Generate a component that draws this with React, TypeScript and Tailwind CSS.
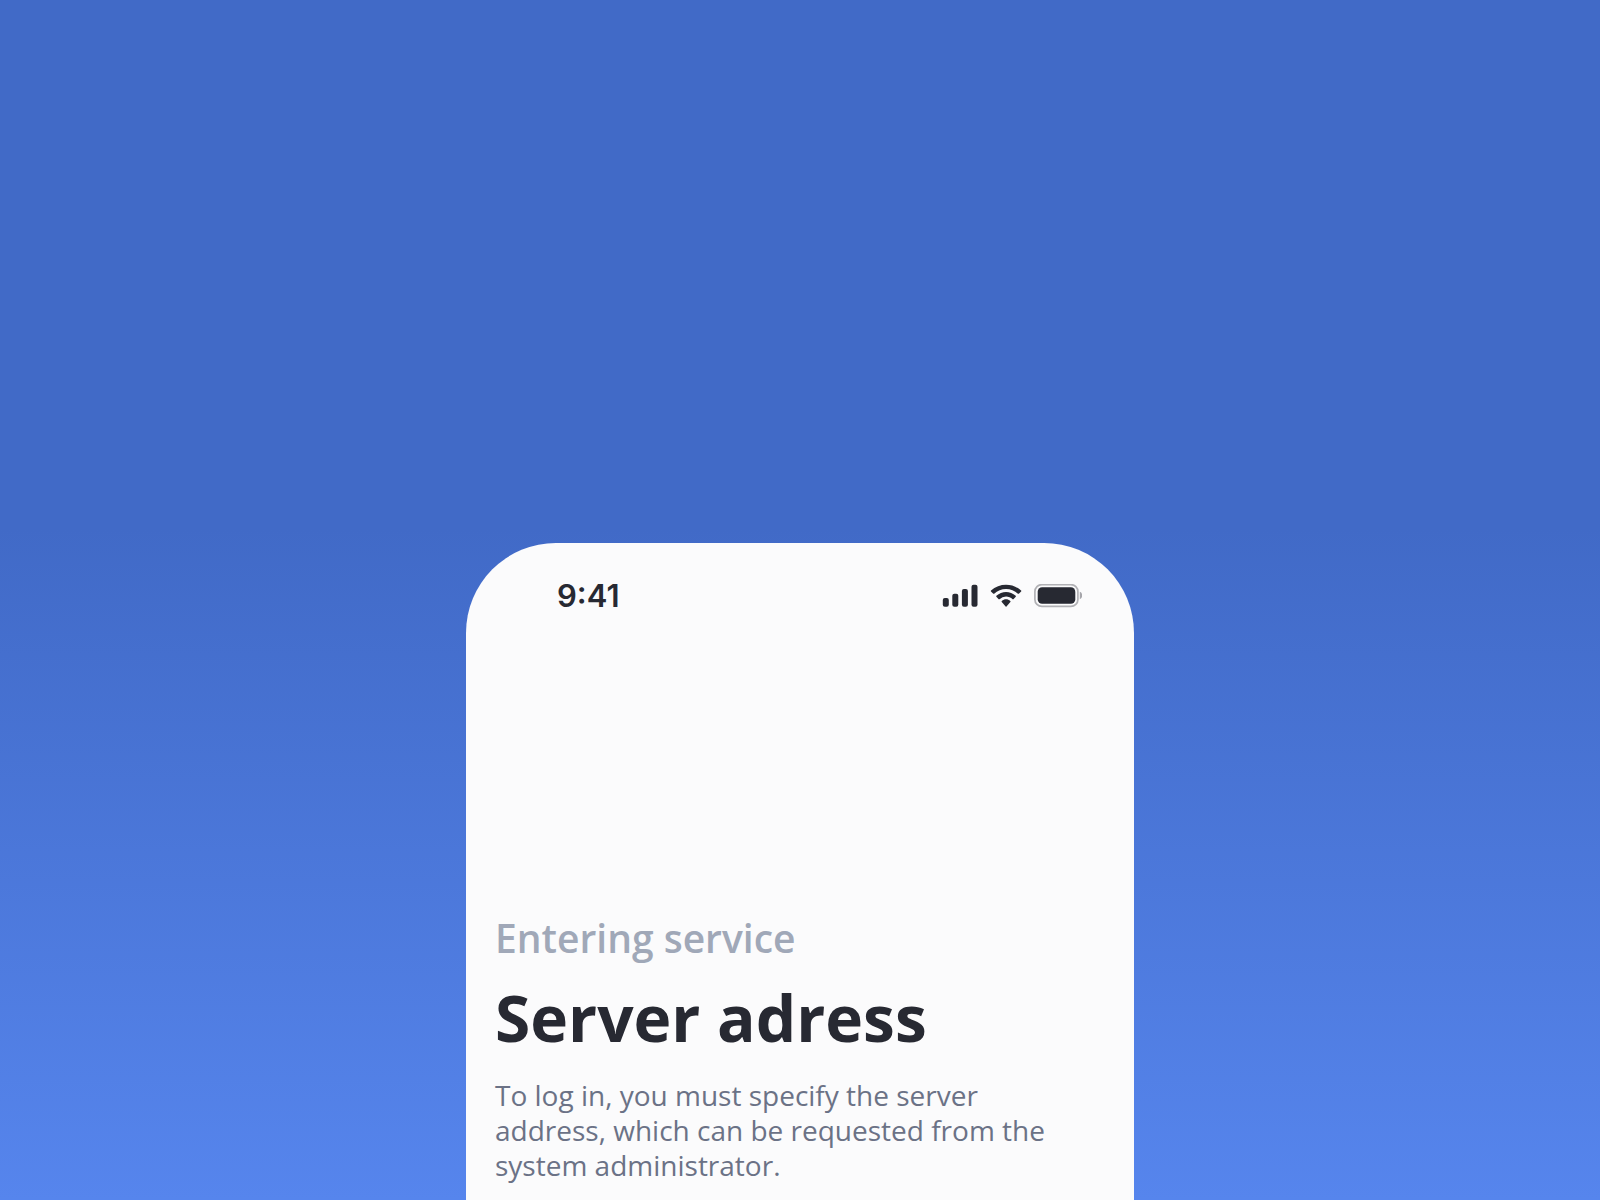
import React from "react";

const SignalIcon: React.FC = () => (
  <svg className="h-6 w-9" viewBox="0 0 36 24" fill="currentColor" aria-hidden="true">
    <rect x="0.8" y="14" width="6" height="8.7" rx="2" />
    <rect x="10.3" y="9.7" width="6" height="13" rx="2" />
    <rect x="19.9" y="5" width="6" height="17.7" rx="2" />
    <rect x="29.5" y="0.7" width="6" height="22" rx="2" />
  </svg>
);

const WifiIcon: React.FC = () => (
  <svg className="h-6 w-8" viewBox="0 0 32 24" fill="currentColor" aria-hidden="true">
    <g transform="translate(0.8 0.7) scale(1.78)">
      <path d="M8.571 2.466c2.487 0 4.879.922 6.682 2.576.136.128.353.126.486-.004l1.298-1.263a.345.345 0 0 0-.003-.494C12.303-1.094 4.839-1.094.108 3.281a.345.345 0 0 0-.003.494l1.298 1.263c.133.13.35.132.486.004 1.803-1.654 4.195-2.576 6.682-2.576Z" />
      <path d="M8.568 6.687c1.357 0 2.666.511 3.672 1.435.136.131.35.129.483-.006l1.288-1.319a.37.37 0 0 0-.006-.519c-3.063-2.844-7.808-2.844-10.872 0a.37.37 0 0 0-.005.519l1.287 1.319c.133.135.347.137.483.006a5.43 5.43 0 0 1 3.67-1.435Z" />
      <path d="M11.092 9.48a.4.4 0 0 1-.102.281l-2.177 2.455a.325.325 0 0 1-.483 0L6.153 9.761a.4.4 0 0 1 .011-.557c1.39-1.314 3.426-1.314 4.816 0a.4.4 0 0 1 .112.276Z" />
    </g>
  </svg>
);

const BatteryIcon: React.FC = () => (
  <svg className="h-6 w-12" viewBox="0 0 48 24" fill="currentColor" aria-hidden="true">
    <rect x="0.9" y="0.6" width="43" height="21.8" rx="7" fill="none" stroke="currentColor" strokeWidth="1.7" opacity="0.35" />
    <rect x="3.7" y="3.3" width="37.6" height="16.4" rx="4.4" />
    <path d="M45.8 7.8v7.4a4 4 0 0 0 0-7.4Z" opacity="0.4" />
  </svg>
);

const App: React.FC = () => {
  return (
    <div className="flex h-screen justify-center overflow-hidden bg-linear-to-b from-[#416ac7] from-44% to-[#5685ed] px-4 pt-[543px]">
      <div className="h-[1446px] w-full max-w-[668px] shrink-0 rounded-[90px] bg-[#fbfbfc] font-['Open_Sans',sans-serif] text-[#272932]">
        {/* Status bar */}
        <div className="flex h-[106px] items-center justify-between pr-13 pl-[91px]">
          <time className="font-[Inter,sans-serif] text-[31px] font-semibold">9:41</time>
          <div className="flex items-center gap-3">
            <SignalIcon />
            <WifiIcon />
            <BatteryIcon />
          </div>
        </div>

        {/* Server address */}
        <main className="px-[29px] pt-[261px]">
          <h2 className="text-[39px] leading-[56px] font-semibold text-[#a0a8b8]">Entering service</h2>
          <h1 className="mt-2 text-[64px] leading-[88px] font-bold">Server adress</h1>
          <p className="mt-4 max-w-[580px] text-[28px] leading-[35px] text-[#6b7286]">
            To log in, you must specify the server address, which can be requested from the system administrator.
          </p>
        </main>
      </div>
    </div>
  );
};

export default App;
